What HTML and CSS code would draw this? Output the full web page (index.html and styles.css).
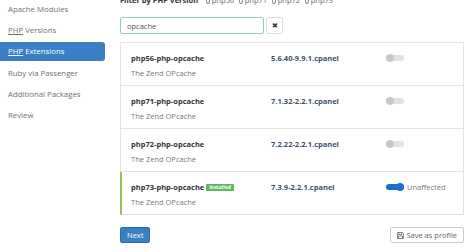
FILE: index.html
```html
<!DOCTYPE html>
<html lang="en">
<head>
  <meta charset="UTF-8">
  <title>EasyApache 4 - PHP Extensions</title>
  <link rel="stylesheet" href="styles.css">
</head>
<body>
<div class="page">
  <ul class="steps">
    <li>Apache Modules</li>
    <li><u>PHP</u> Versions</li>
    <li class="active"><u>PHP</u> Extensions</li>
    <li>Ruby via Passenger</li>
    <li>Additional Packages</li>
    <li>Review</li>
  </ul>

  <div class="main">
    <div class="filter">
      <b>Filter by PHP Version</b>
      <label><span class="radio"></span>php56</label>
      <label><span class="radio"></span>php71</label>
      <label><span class="radio"></span>php72</label>
      <label><span class="radio"></span>php73</label>
    </div>

    <div class="search">
      <input type="text" value="opcache">
      <button class="clear">&#10006;</button>
    </div>

    <div class="list">
      <div class="row">
        <div class="name">
          <b>php56-php-opcache</b>
          <span class="desc">The Zend OPcache</span>
        </div>
        <div class="version">5.6.40-9.9.1.cpanel</div>
        <div class="state"><span class="toggle"><span class="knob"></span></span></div>
      </div>
      <div class="row">
        <div class="name">
          <b>php71-php-opcache</b>
          <span class="desc">The Zend OPcache</span>
        </div>
        <div class="version">7.1.32-2.2.1.cpanel</div>
        <div class="state"><span class="toggle"><span class="knob"></span></span></div>
      </div>
      <div class="row">
        <div class="name">
          <b>php72-php-opcache</b>
          <span class="desc">The Zend OPcache</span>
        </div>
        <div class="version">7.2.22-2.2.1.cpanel</div>
        <div class="state"><span class="toggle"><span class="knob"></span></span></div>
      </div>
      <div class="row installed">
        <div class="name">
          <b>php73-php-opcache <span class="badge">Installed</span></b>
          <span class="desc">The Zend OPcache</span>
        </div>
        <div class="version">7.3.9-2.2.1.cpanel</div>
        <div class="state"><span class="toggle on"><span class="knob"></span></span><span class="note">Unaffected</span></div>
      </div>
    </div>

    <div class="actions">
      <button class="next">Next</button>
      <button class="save">
        <svg width="7" height="7" viewBox="0 0 14 14"><path d="M1 1h10l2 2v10H1z M3.5 1v4h6V1 M3 13V8h8v5" fill="none" stroke="#666" stroke-width="1.6"/></svg>
        Save as profile
      </button>
    </div>
  </div>
</div>
</body>
</html>
```

FILE: styles.css
```css
body {
  margin: 0;
  font-family: "Open Sans", sans-serif;
  font-size: 7.5px;
  color: #333;
  background: #fff;
}
.page {
  display: flex;
  gap: 15px;
}
.steps {
  list-style: none;
  margin: 0;
  padding: 0;
  width: 105px;
  font-size: 7.8px;
}
.steps li {
  height: 19px;
  line-height: 19px;
  padding-left: 8px;
  margin-bottom: 2.2px;
  color: #6f6f6f;
  border-radius: 0 3px 3px 0;
}
.steps li.active {
  background: #3a7fc4;
  color: #fff;
}
.main {
  width: 344px;
}
.filter {
  margin-top: -5px;
  height: 10px;
  display: flex;
  align-items: center;
  gap: 5px;
  color: #666;
}
.filter b {
  color: #333;
  margin-right: 3px;
}
.filter label {
  display: flex;
  align-items: center;
  gap: 2px;
  width: 28px;
}
.radio {
  width: 5px;
  height: 5px;
  border: 1px solid #888;
  border-radius: 50%;
}
.search {
  display: flex;
  gap: 2px;
  margin-top: 12px;
}
.search input {
  width: 144px;
  height: 17px;
  box-sizing: border-box;
  border: 1px solid #8fcfc6;
  border-radius: 2px;
  padding: 0 6px;
  font: inherit;
  color: #555;
}
.clear {
  width: 17px;
  height: 17px;
  border: 1px solid #ddd;
  border-radius: 2px;
  background: #fff;
  font-size: 7px;
  padding: 0;
  color: #333;
}
.list {
  margin-top: 8px;
  border: 1px solid #e3e3e3;
  border-bottom: none;
}
.row {
  display: flex;
  height: 43px;
  border-bottom: 1px solid #e3e3e3;
  box-sizing: border-box;
  padding: 10px 0 0 10px;
}
.row.installed {
  border-left: 2px solid #9bbf5a;
  margin-left: -1px;
  padding-left: 9px;
}
.name {
  width: 140px;
  display: flex;
  flex-direction: column;
  gap: 5px;
}
.name b {
  line-height: 10px;
  color: #333;
}
.desc {
  line-height: 10px;
  color: #777;
}
.badge {
  display: inline-block;
  background: #5cb85c;
  color: #fff;
  font-size: 5px;
  line-height: 7px;
  padding: 0 3px;
  border-radius: 1px;
  vertical-align: 1px;
}
.version {
  width: 115px;
  font-weight: bold;
  color: #3b526b;
  line-height: 10px;
}
.state {
  display: flex;
  align-items: center;
  height: 10px;
  gap: 3px;
}
.toggle {
  display: flex;
  align-items: center;
  width: 18px;
  height: 6px;
  border-radius: 3px;
  background: #e2e2e2;
}
.knob {
  width: 8px;
  height: 8px;
  border-radius: 50%;
  background: #c8c8c8;
}
.toggle.on {
  background: #1c6fd0;
  justify-content: flex-end;
}
.toggle.on .knob {
  background: #1c6fd0;
}
.note {
  color: #777;
}
.actions {
  display: flex;
  justify-content: space-between;
  margin-top: 12px;
}
.actions button {
  height: 16px;
  font: inherit;
  border-radius: 2px;
  padding: 0 6px;
}
.next {
  background: #3a7fc4;
  color: #fff;
  border: 1px solid #2f6ea8;
}
.save {
  background: #fff;
  color: #666;
  border: 1px solid #ccc;
  display: flex;
  align-items: center;
  gap: 2px;
}
```
